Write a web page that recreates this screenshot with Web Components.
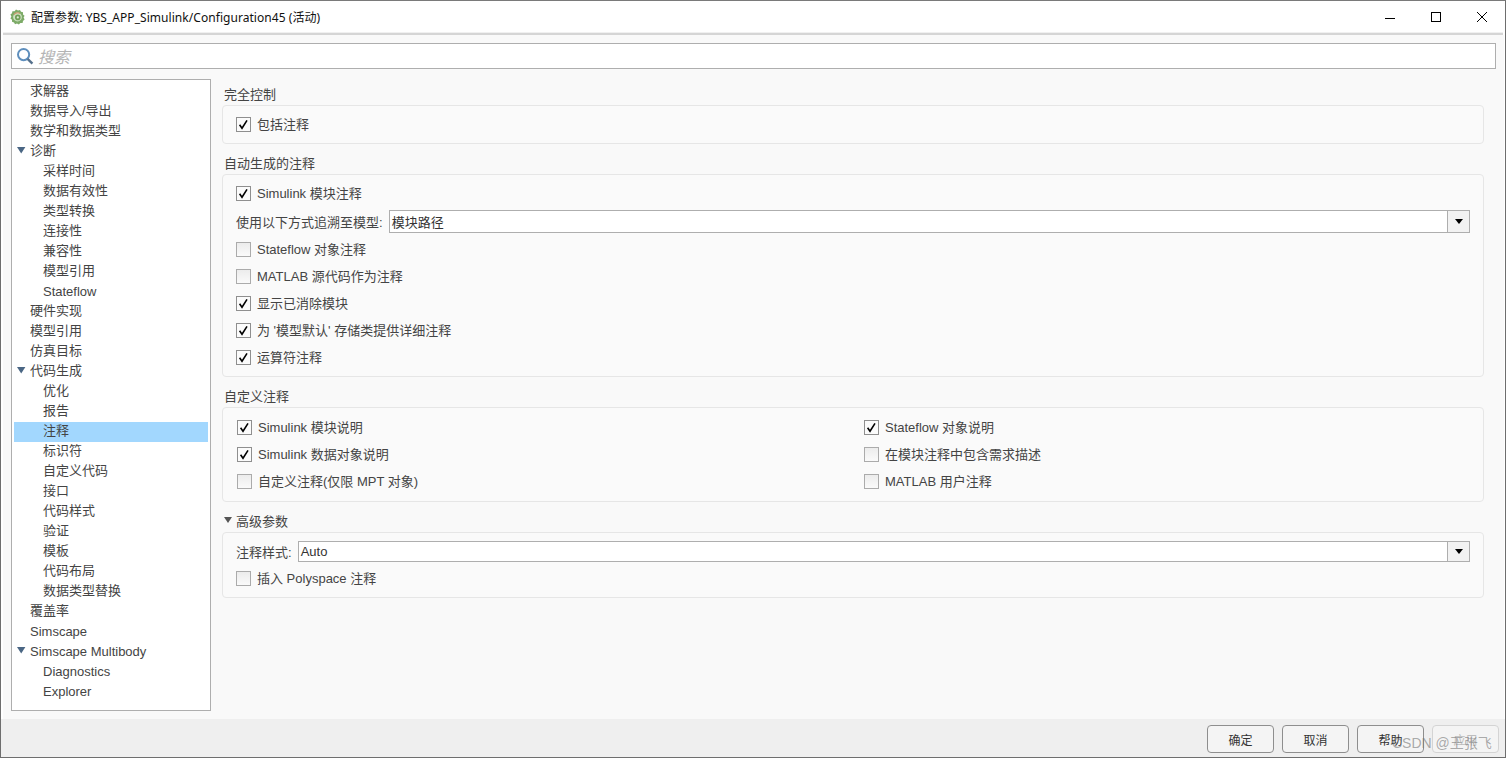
<!DOCTYPE html>
<html lang="zh">
<head>
<meta charset="utf-8">
<title>配置参数</title>
<style>
    html, body {
        margin: 0;
        height: 100%;
        overflow: hidden;
    }
    body {
        font: 13px "Liberation Sans", "Noto Sans CJK SC", sans-serif;
        color: #444;
    }
</style>
</head>
<body>
<config-window></config-window>

<script>
const CHECK_SVG = `<svg width="13" height="13" viewBox="0 0 13 13"><path d="M2.6 6.8 L5 10.2 L10 2.4" fill="none" stroke="#000" stroke-width="1.6"/></svg>`;

class TitleBar extends HTMLElement {
    constructor() {
        super();
        this.shadowObj = this.attachShadow({ mode: 'open' });
        this.shadowObj.innerHTML = `
        <style>
            :host {
                display: flex;
                align-items: center;
                height: 31px;
                background: #fff;
                color: #111;
                font: 12px "Noto Sans", "Noto Sans CJK SC", sans-serif;
                letter-spacing: 0.05px;
                padding-left: 9px;
            }
            .title { margin-left: 6px; flex: 1; }
            .btns { display: flex; }
            .btn { width: 46px; height: 31px; display: flex; align-items: center; justify-content: center; }
        </style>
        <svg width="15" height="16" viewBox="0 0 15 16">
            <path d="M6 0.6 L8 1.6 L10 1 L11 2.8 L13 3.2 L13 5.4 L14.6 6.8 L13.6 8.6 L14.6 10.6 L13 12 L12.6 14 L10.4 14 L8.8 15.6 L7 14.6 L5 15.2 L4 13.4 L2 12.8 L2 10.8 L0.4 9.4 L1.4 7.6 L0.4 5.6 L2 4.2 L2.4 2.2 L4.6 2.2 Z" fill="#7dab68"/>
            <circle cx="7.5" cy="8" r="4.4" fill="#cfe2c4"/>
            <path d="M4 5.8 A4.2 4.2 0 0 1 10 4.6" fill="none" stroke="#cf9a6e" stroke-width="1.1"/>
            <circle cx="7.8" cy="8.4" r="2.8" fill="#6f9e55"/>
            <circle cx="7.8" cy="8.4" r="1.1" fill="#dcebd3"/>
        </svg>
        <span class="title">配置参数: YBS_APP_Simulink/Configuration45 (活动)</span>
        <div class="btns">
            <div class="btn"><svg width="12" height="12" viewBox="0 0 12 12"><path d="M1 7.5 H11" stroke="#000" stroke-width="1"/></svg></div>
            <div class="btn"><svg width="12" height="12" viewBox="0 0 12 12"><rect x="1.5" y="1.5" width="9" height="9" fill="none" stroke="#000"/></svg></div>
            <div class="btn"><svg width="12" height="12" viewBox="0 0 12 12"><path d="M1 1 L11 11 M11 1 L1 11" stroke="#000" stroke-width="1"/></svg></div>
        </div>
        `;
    }
}
customElements.define('title-bar', TitleBar);

class SearchBox extends HTMLElement {
    constructor() {
        super();
        this.shadowObj = this.attachShadow({ mode: 'open' });
        this.shadowObj.innerHTML = `
        <style>
            :host {
                display: flex;
                align-items: center;
                box-sizing: border-box;
                height: 26px;
                background: #fff;
                border: 1px solid #aeaeae;
                padding-left: 4px;
            }
            span {
                margin-left: 4px;
                font-size: 16px;
                font-style: italic;
                color: #b4b4b4;
            }
        </style>
        <svg width="18" height="18" viewBox="0 0 18 18">
            <circle cx="7.6" cy="7.6" r="5.6" fill="none" stroke="#5f8fbd" stroke-width="2"/>
            <path d="M11.6 11.8 L16.4 16.6" stroke="#55708c" stroke-width="2.4"/>
        </svg>
        <span>搜索</span>
        `;
    }
}
customElements.define('search-box', SearchBox);

class TreeRow extends HTMLElement {
    constructor() {
        super();
        this.shadowObj = this.attachShadow({ mode: 'open' });
        const level = this.getAttribute('level') || '0';
        const open = this.hasAttribute('open');
        this.shadowObj.innerHTML = `
        <style>
            :host {
                display: flex;
                align-items: center;
                box-sizing: border-box;
                height: 20px;
                line-height: 16px;
                padding-bottom: 2px;
                padding-left: ${level === '1' ? 29 : 16}px;
                position: relative;
                white-space: nowrap;
            }
            :host([latin]) { padding-bottom: 0; }
            :host([selected]) { background: #a2d7fe; }
            svg { position: absolute; left: 3px; top: 5px; }
        </style>
        ${open ? '<svg width="9" height="7" viewBox="0 0 9 7"><path d="M0 0 H8.4 L4.2 6.4 Z" fill="#4a6684"/></svg>' : ''}
        <slot></slot>
        `;
    }
}
customElements.define('tree-row', TreeRow);

class ConfigTree extends HTMLElement {
    constructor() {
        super();
        this.shadowObj = this.attachShadow({ mode: 'open' });
        this.shadowObj.innerHTML = `
        <style>
            :host {
                display: block;
                box-sizing: border-box;
                width: 200px;
                height: 632px;
                background: #fff;
                border: 1px solid #aeaeae;
                padding: 2px;
            }
        </style>
        <slot></slot>
        `;
    }
}
customElements.define('config-tree', ConfigTree);

class CheckItem extends HTMLElement {
    constructor() {
        super();
        this.shadowObj = this.attachShadow({ mode: 'open' });
        const checked = this.hasAttribute('checked');
        this.shadowObj.innerHTML = `
        <style>
            :host {
                display: flex;
                align-items: center;
                height: 27px;
                white-space: nowrap;
            }
            .box {
                box-sizing: border-box;
                width: 15px;
                height: 15px;
                margin-right: 6px;
                border: 1px solid ${checked ? '#8f8f8f' : '#ababab'};
                background: ${checked ? '#fbfbfb' : 'linear-gradient(#ececec, #fafafa)'};
                display: flex;
                align-items: center;
                justify-content: center;
            }
            .label { padding-bottom: 2px; }
        </style>
        <div class="box">${checked ? CHECK_SVG : ''}</div>
        <span class="label"><slot></slot></span>
        `;
    }
}
customElements.define('check-item', CheckItem);

class ComboField extends HTMLElement {
    constructor() {
        super();
        this.shadowObj = this.attachShadow({ mode: 'open' });
        const tall = this.hasAttribute('tall');
        this.shadowObj.innerHTML = `
        <style>
            :host {
                display: flex;
                align-items: center;
                height: ${tall ? 29 : 27}px;
                white-space: nowrap;
            }
            .field {
                flex: 1;
                display: flex;
                box-sizing: border-box;
                height: ${tall ? 23 : 21}px;
                margin-left: 6px;
                border: 1px solid #aeaeae;
                background: #fff;
                color: #333;
                align-items: center;
            }
            .value { flex: 1; padding-left: 2px; }
            .arrow {
                align-self: stretch;
                width: 21px;
                border-left: 1px solid #aeaeae;
                background: #f2f2f2;
                display: flex;
                align-items: center;
                justify-content: center;
            }
        </style>
        <span>${this.getAttribute('label')}</span>
        <div class="field">
            <span class="value">${this.getAttribute('value')}</span>
            <div class="arrow"><svg width="8" height="5" viewBox="0 0 8 5"><path d="M0 0 H8 L4 5 Z" fill="#000"/></svg></div>
        </div>
        `;
    }
}
customElements.define('combo-field', ComboField);

class ParamGroup extends HTMLElement {
    constructor() {
        super();
        this.shadowObj = this.attachShadow({ mode: 'open' });
        const open = this.hasAttribute('collapsible');
        this.shadowObj.innerHTML = `
        <style>
            :host { display: block; }
            .head {
                display: flex;
                align-items: center;
                box-sizing: border-box;
                height: 23px;
                padding: 0 0 1px 2px;
            }
            .head svg { margin-right: 4px; }
            .panel {
                box-sizing: border-box;
                border: 1px solid #e6e6e6;
                border-radius: 4px;
                background: #fafafa;
                padding: var(--pad, 5px 13px);
            }
        </style>
        <div class="head">
            ${open ? '<svg width="8" height="6" viewBox="0 0 8 6"><path d="M0 0 H8 L4 6 Z" fill="#555"/></svg>' : ''}
            <span>${this.getAttribute('label')}</span>
        </div>
        <div class="panel"><slot></slot></div>
        `;
    }
}
customElements.define('param-group', ParamGroup);

class PushButton extends HTMLElement {
    constructor() {
        super();
        this.shadowObj = this.attachShadow({ mode: 'open' });
        this.shadowObj.innerHTML = `
        <style>
            :host {
                display: flex;
                align-items: center;
                justify-content: center;
                box-sizing: border-box;
                width: 67px;
                height: 28px;
                border: 1px solid #8e8e8e;
                border-radius: 4px;
                background: #f4f4f4;
                color: #333;
                font-size: 12px;
            }
            :host([disabled]) { border-color: #d4d4d4; color: #bdbdbd; }
        </style>
        <slot></slot>
        `;
    }
}
customElements.define('push-button', PushButton);

class ConfigWindow extends HTMLElement {
    constructor() {
        super();
        this.shadowObj = this.attachShadow({ mode: 'open' });
        this.shadowObj.innerHTML = this._getTemplate();
    }

    _tree() {
        const rows = [
            ['求解器'], ['数据导入/导出'], ['数学和数据类型'],
            ['诊断', 0, 'open'],
            ['采样时间', 1], ['数据有效性', 1], ['类型转换', 1], ['连接性', 1], ['兼容性', 1], ['模型引用', 1], ['Stateflow', 1, 'latin'],
            ['硬件实现'], ['模型引用'], ['仿真目标'],
            ['代码生成', 0, 'open'],
            ['优化', 1], ['报告', 1], ['注释', 1, 'selected'], ['标识符', 1], ['自定义代码', 1], ['接口', 1],
            ['代码样式', 1], ['验证', 1], ['模板', 1], ['代码布局', 1], ['数据类型替换', 1],
            ['覆盖率'], ['Simscape', 0, 'latin'],
            ['Simscape Multibody', 0, 'open latin'],
            ['Diagnostics', 1, 'latin'], ['Explorer', 1, 'latin']
        ];
        return rows.map(r => `<tree-row level="${r[1] || 0}" ${r[2] || ''}>${r[0]}</tree-row>`).join('');
    }

    _getTemplate() {
        return `
        <style>
            :host {
                display: block;
                box-sizing: border-box;
                position: relative;
                width: 1506px;
                height: 758px;
                border: 1px solid #6e6e6e;
                border-top-color: #7a7a7a;
                background: #fff;
                overflow: hidden;
            }
            .band { height: 3px; margin: 0 2px; border-top: 1px solid #f0f0f0; background: #d5d5d5; box-sizing: border-box; }
            .client {
                box-sizing: border-box;
                height: 684px;
                margin: 0 1px 0 2px;
                background: #f9f9f9;
                padding: 8px 8px 0 8px;
            }
            .main {
                display: flex;
                margin-top: 10px;
            }
            .side { flex: none; }
            .params { flex: 1; margin-left: 11px; padding-top: 3px; margin-right: 12px; }
            param-group + param-group { margin-top: 7px; }
            .two {
                display: grid;
                grid-template-columns: 627px 1fr;
            }
            .footer {
                display: flex;
                justify-content: flex-end;
                gap: 8px;
                height: 38px;
                box-sizing: border-box;
                padding: 6px 6px 0 0;
                background: #efefef;
            }
            .mark {
                position: absolute;
                left: 1391px;
                top: 731px;
                font-size: 14px;
                color: rgba(120, 120, 120, 0.62);
                white-space: nowrap;
            }
        </style>
        <title-bar></title-bar>
        <div class="band"></div>
        <div class="client">
            <search-box></search-box>
            <div class="main">
                <div class="side"><config-tree>${this._tree()}</config-tree></div>
                <div class="params">
                    <param-group label="完全控制">
                        <check-item checked>包括注释</check-item>
                    </param-group>
                    <param-group label="自动生成的注释">
                        <check-item checked>Simulink 模块注释</check-item>
                        <combo-field tall label="使用以下方式追溯至模型:" value="模块路径"></combo-field>
                        <check-item>Stateflow 对象注释</check-item>
                        <check-item>MATLAB 源代码作为注释</check-item>
                        <check-item checked>显示已消除模块</check-item>
                        <check-item checked>为 '模型默认' 存储类提供详细注释</check-item>
                        <check-item checked>运算符注释</check-item>
                    </param-group>
                    <param-group label="自定义注释" style="--pad: 6px 14px">
                        <div class="two">
                            <check-item checked>Simulink 模块说明</check-item>
                            <check-item checked>Stateflow 对象说明</check-item>
                            <check-item checked>Simulink 数据对象说明</check-item>
                            <check-item>在模块注释中包含需求描述</check-item>
                            <check-item>自定义注释(仅限 MPT 对象)</check-item>
                            <check-item>MATLAB 用户注释</check-item>
                        </div>
                    </param-group>
                    <param-group label="高级参数" collapsible>
                        <combo-field label="注释样式:" value="Auto"></combo-field>
                        <check-item>插入 Polyspace 注释</check-item>
                    </param-group>
                </div>
            </div>
        </div>
        <div class="footer">
            <push-button>确定</push-button>
            <push-button>取消</push-button>
            <push-button>帮助</push-button>
            <push-button disabled>应用</push-button>
        </div>
        <div class="mark">CSDN @王张飞</div>
        `;
    }
}
customElements.define('config-window', ConfigWindow);
</script>
</body>
</html>
